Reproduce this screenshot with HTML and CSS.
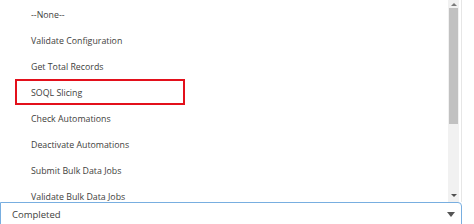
FILE: index.html
```html
<!DOCTYPE html>
<html>
<head>
<meta charset="utf-8">
<link rel="stylesheet" href="styles.css">
</head>
<body>
<div class="picker">
  <div class="listbox">
    <ul class="options">
      <li class="option">--None--</li>
      <li class="option">Validate Configuration</li>
      <li class="option">Get Total Records</li>
      <li class="option option-marked">SOQL Slicing<span class="highlight"></span></li>
      <li class="option">Check Automations</li>
      <li class="option">Deactivate Automations</li>
      <li class="option">Submit Bulk Data Jobs</li>
      <li class="option">Validate Bulk Data Jobs</li>
    </ul>
    <div class="scrollbar">
      <div class="arrow arrow-up"></div>
      <div class="track"><div class="thumb"></div></div>
      <div class="arrow arrow-down"></div>
    </div>
  </div>
  <div class="select">
    <span class="select-value">Completed</span>
    <span class="select-caret"></span>
  </div>
</div>
</body>
</html>
```
FILE: styles.css
```css
html, body {
  margin: 0;
  padding: 0;
  background: #ffffff;
}
body {
  width: 474px;
  height: 224px;
  overflow: hidden;
  font-family: "Open Sans", "Liberation Sans", sans-serif;
  color: #3e3e3c;
}
.picker {
  width: 462px;
  display: flex;
  flex-direction: column;
}
.listbox {
  height: 202px;
  display: flex;
  border-right: 1px solid #e6e6e6;
  overflow: hidden;
}
.options {
  list-style: none;
  margin: 0;
  padding: 2px 0 0 0;
  flex: 1;
}
.option {
  position: relative;
  height: 26px;
  line-height: 26px;
  padding-left: 31px;
  font-size: 8.8px;
  white-space: nowrap;
}
.highlight {
  position: absolute;
  left: 15px;
  top: -1px;
  width: 170px;
  height: 26px;
  box-sizing: border-box;
  border: 2px solid #e3101b;
}
.scrollbar {
  width: 11px;
  margin-right: 2px;
  display: flex;
  flex-direction: column;
  background: #f1f1f1;
}
.track {
  flex: 1;
  padding: 0 1px;
}
.thumb {
  height: 116px;
  background: #c1c1c1;
}
.arrow {
  height: 8px;
  display: flex;
  align-items: center;
  justify-content: center;
}
.arrow::before {
  content: "";
  border-left: 3px solid transparent;
  border-right: 3px solid transparent;
}
.arrow-up::before {
  border-bottom: 3px solid #7a7a7a;
}
.arrow-down {
  height: 12px;
  align-items: flex-start;
}
.arrow-down::before {
  border-top: 3px solid #505050;
  margin-top: 4px;
}
.select {
  height: 24px;
  box-sizing: border-box;
  border: 1px solid #78aee0;
  border-radius: 0 4px 0 0;
  display: flex;
  align-items: center;
  justify-content: space-between;
  padding: 0 6px 0 11px;
}
.select-value {
  font-size: 9.5px;
  color: #3e3e3c;
}
.select-caret {
  width: 0;
  height: 0;
  border-left: 4.5px solid transparent;
  border-right: 4.5px solid transparent;
  border-top: 5px solid #555555;
  margin-top: 1px;
}
```
